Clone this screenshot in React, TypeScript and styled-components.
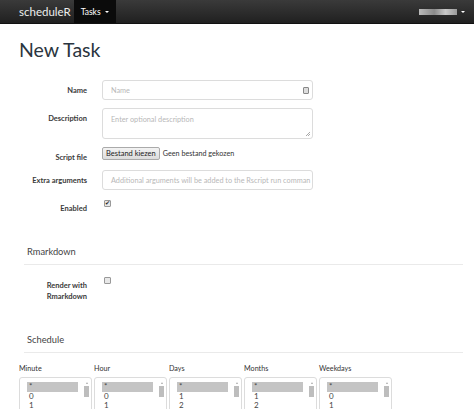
import styled, { createGlobalStyle } from 'styled-components'

const GlobalStyle = createGlobalStyle`
  html, body {
    margin: 0;
    padding: 0;
    background: #fff;
    font-family: Lato, 'Open Sans', sans-serif;
    color: #333;
    overflow: hidden;
  }
`

const Navbar = styled.div`
  height: 23px;
  display: flex;
  align-items: stretch;
  padding: 0 2px 0 19px;
  background: linear-gradient(#3a3a3a, #202020);
  border-bottom: 1px solid #111;
`

const Brand = styled.div`
  color: #eee;
  font-size: 11.5px;
  display: flex;
  align-items: center;
  margin-right: 3px;
`

const NavItem = styled.div<{ active?: boolean }>`
  display: flex;
  align-items: center;
  gap: 3px;
  padding: 0 7px;
  font-size: 8.5px;
  color: #fff;
  background: ${(p) => (p.active ? '#0b0b0b' : 'transparent')};
`

const Caret = styled.span`
  width: 0;
  height: 0;
  border-left: 2px solid transparent;
  border-right: 2px solid transparent;
  border-top: 2px solid #fff;
  margin-left: 1px;
`

const Spacer = styled.div`
  flex: 1;
`

const Blurred = styled.div`
  width: 38px;
  height: 6px;
  background: linear-gradient(90deg, #bbb, #8a8a8a 40%, #c8c8c8 70%, #999);
  filter: blur(0.6px);
`

const Page = styled.div`
  padding: 0 11px 0 19px;
`

const Title = styled.h1`
  margin: 14px 0 18px 0;
  font-size: 19.5px;
  font-weight: 400;
  color: #2b3540;
  line-height: 24px;
`

const Row = styled.div<{ h?: number }>`
  display: flex;
  align-items: flex-start;
  margin-bottom: 8px;
  ${(p) => (p.h ? `height: ${p.h}px;` : '')}
`

const Label = styled.label`
  width: 68px;
  flex: none;
  margin-right: 15px;
  text-align: right;
  font-size: 7.5px;
  font-weight: 700;
  color: #3a3a3a;
  padding-top: 5px;
  line-height: 11px;
`

const Input = styled.div<{ h?: number }>`
  width: 211px;
  height: ${(p) => p.h ?? 20}px;
  box-sizing: border-box;
  border: 1px solid #dcdcdc;
  border-radius: 3px;
  padding: ${(p) => (p.h && p.h > 20 ? '6px 8px' : '0 8px')};
  display: flex;
  align-items: ${(p) => (p.h && p.h > 20 ? 'flex-start' : 'center')};
  font-size: 7.3px;
  color: #b8b8b8;
  position: relative;
  white-space: nowrap;
  overflow: hidden;
`

const KeyIcon = styled.span`
  position: absolute;
  right: 3px;
  top: 6px;
  width: 4px;
  height: 5px;
  border: 1px solid #888;
  border-radius: 1px;
  background: #ddd;
`

const Grip = styled.span`
  position: absolute;
  right: 2px;
  bottom: 2px;
  width: 4px;
  height: 4px;
  background: linear-gradient(135deg, transparent 45%, #aaa 50%, transparent 60%, transparent 70%, #aaa 75%, transparent 85%);
`

const FileRow = styled.div`
  display: flex;
  align-items: center;
  gap: 3px;
  font-size: 7.2px;
  color: #333;
`

const FileButton = styled.div`
  border: 1px solid #aaa;
  background: linear-gradient(#f3f3f3, #dcdcdc);
  border-radius: 2px;
  padding: 1px 3px;
  font-size: 7.5px;
  color: #222;
`

const Check = styled.div`
  width: 5px;
  height: 5px;
  border: 1px solid #999;
  border-radius: 1px;
  background: #e8e8e8;
  margin-top: 2px;
  margin-left: 2px;
  font-size: 5.5px;
  line-height: 5px;
  color: #222;
  text-align: center;
`

const Section = styled.div<{ top: number }>`
  margin: ${(p) => p.top}px 0 10px 5px;
  border-bottom: 1px solid #eaeaea;
  padding: 0 0 5px 3px;
  font-size: 9.3px;
  color: #444;
  line-height: 14px;
`

const Grid = styled.div`
  display: flex;
  gap: 2px;
  margin-top: 11px;
`

const Col = styled.div`
  width: 73px;
`

const ColLabel = styled.div`
  font-size: 7.2px;
  line-height: 10px;
  color: #333;
  margin-bottom: 3px;
`

const ListBox = styled.div`
  height: 40px;
  border: 1px solid #dcdcdc;
  border-radius: 3px;
  display: flex;
  padding: 4px 2px 0 7px;
  box-sizing: border-box;
`

const Options = styled.div`
  flex: 1;
  font-size: 8px;
  line-height: 9.5px;
  color: #444;
`

const Option = styled.div<{ selected?: boolean }>`
  padding-left: 2px;
  background: ${(p) => (p.selected ? '#c4c4c4' : 'transparent')};
  margin-right: 6px;
`

const Scroll = styled.div`
  width: 5px;
  display: flex;
  flex-direction: column;
  align-items: center;
  gap: 2px;
`

const ArrowUp = styled.span`
  width: 0;
  height: 0;
  border-left: 1.5px solid transparent;
  border-right: 1.5px solid transparent;
  border-bottom: 2px solid #aaa;
`

const Thumb = styled.span`
  width: 5px;
  height: 11px;
  background: #bdbdbd;
`

const columns = [
  { name: 'Minute', items: ['0', '1'] },
  { name: 'Hour', items: ['0', '1'] },
  { name: 'Days', items: ['1', '2'] },
  { name: 'Months', items: ['1', '2'] },
  { name: 'Weekdays', items: ['0', '1'] },
]

export default function App() {
  return (
    <>
      <GlobalStyle />
      <Navbar>
        <Brand>scheduleR</Brand>
        <NavItem active>
          Tasks <Caret />
        </NavItem>
        <Spacer />
        <NavItem>
          <Blurred />
          <Caret />
        </NavItem>
      </Navbar>
      <Page>
        <Title>New Task</Title>
        <Row>
          <Label>Name</Label>
          <Input>
            Name
            <KeyIcon />
          </Input>
        </Row>
        <Row>
          <Label>Description</Label>
          <Input h={31}>
            Enter optional description
            <Grip />
          </Input>
        </Row>
        <Row h={15}>
          <Label>Script file</Label>
          <FileRow>
            <FileButton>Bestand kiezen</FileButton>
            Geen bestand gekozen
          </FileRow>
        </Row>
        <Row>
          <Label>Extra arguments</Label>
          <Input>Additional arguments will be added to the Rscript run comman</Input>
        </Row>
        <Row>
          <Label>Enabled</Label>
          <Check>✔</Check>
        </Row>
        <Section top={31}>Rmarkdown</Section>
        <Row>
          <Label>
            Render with
            <br />
            Rmarkdown
          </Label>
          <Check />
        </Row>
        <Section top={31}>Schedule</Section>
        <Grid>
          {columns.map((c) => (
            <Col key={c.name}>
              <ColLabel>{c.name}</ColLabel>
              <ListBox>
                <Options>
                  <Option selected>*</Option>
                  {c.items.map((i) => (
                    <Option key={i}>{i}</Option>
                  ))}
                </Options>
                <Scroll>
                  <ArrowUp />
                  <Thumb />
                </Scroll>
              </ListBox>
            </Col>
          ))}
        </Grid>
      </Page>
    </>
  )
}
